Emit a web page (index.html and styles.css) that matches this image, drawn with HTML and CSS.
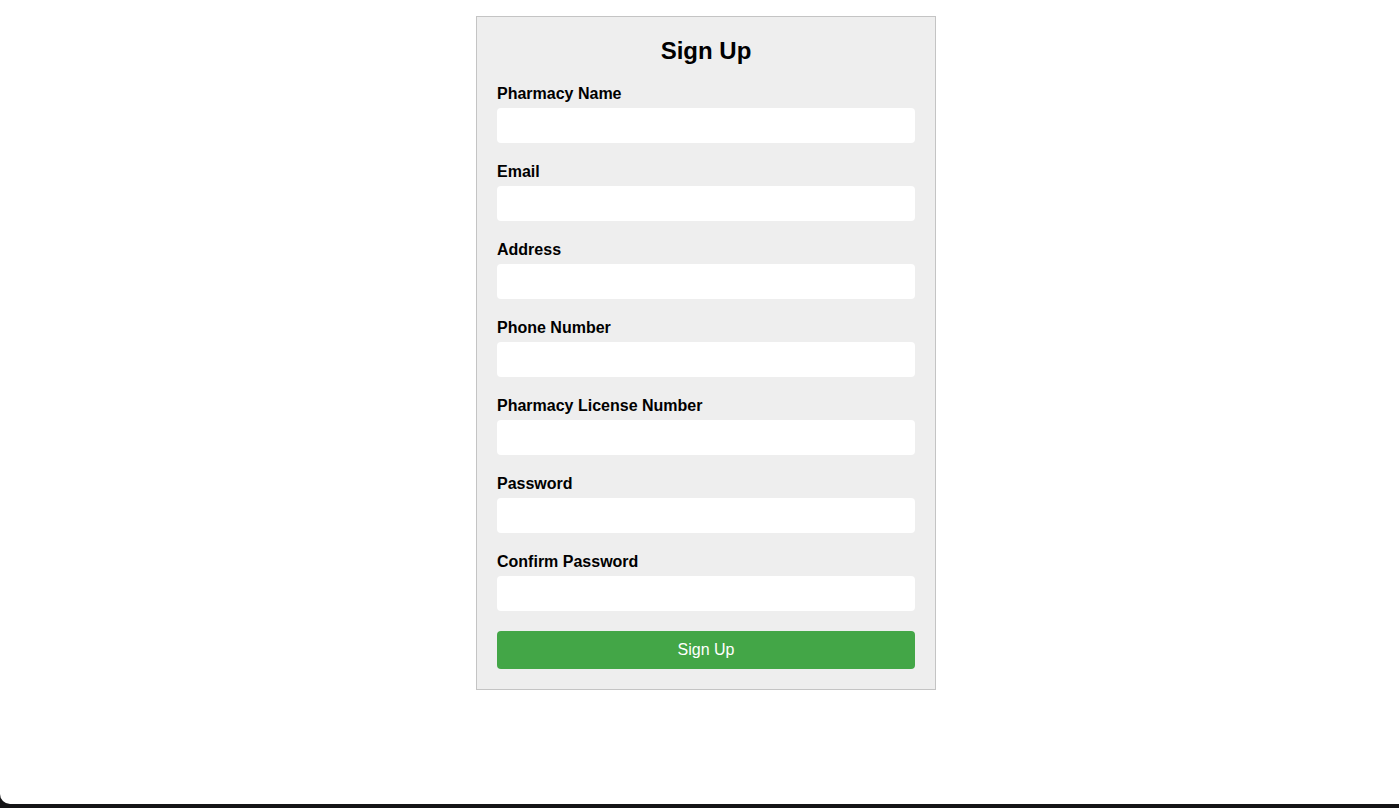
FILE: index.html
```html
<!DOCTYPE html>
<html lang="en">
<head>
<meta charset="utf-8">
<title>Sign Up</title>
<link rel="stylesheet" href="styles.css">
</head>
<body>
<div class="page">
  <form class="card">
    <h2 class="title">Sign Up</h2>
    <div class="group">
      <label class="label">Pharmacy Name</label>
      <input class="input" type="text">
    </div>
    <div class="group">
      <label class="label">Email</label>
      <input class="input" type="email">
    </div>
    <div class="group">
      <label class="label">Address</label>
      <input class="input" type="text">
    </div>
    <div class="group">
      <label class="label">Phone Number</label>
      <input class="input" type="text">
    </div>
    <div class="group">
      <label class="label">Pharmacy License Number</label>
      <input class="input" type="text">
    </div>
    <div class="group">
      <label class="label">Password</label>
      <input class="input" type="password">
    </div>
    <div class="group">
      <label class="label">Confirm Password</label>
      <input class="input" type="password">
    </div>
    <button class="btn" type="button">Sign Up</button>
  </form>
</div>
</body>
</html>
```

FILE: styles.css
```css
html, body {
  margin: 0;
  padding: 0;
  background: #141416;
  height: 808px;
  overflow: hidden;
}
body {
  font-family: "Liberation Sans", Arial, sans-serif;
  color: #000;
}
.page {
  height: 804px;
  background: #fff;
  border-bottom-left-radius: 10px;
  padding: 16px 0 0 476px;
  box-sizing: border-box;
}
.card {
  width: 460px;
  box-sizing: border-box;
  padding: 20px;
  background: #eeeeee;
  border: 1px solid #c4c4c4;
}
.title {
  margin: 0 0 20px;
  font-size: 24px;
  line-height: 28px;
  font-weight: bold;
  text-align: center;
}
.group {
  margin-bottom: 20px;
}
.label {
  display: block;
  font-size: 16px;
  line-height: 18px;
  font-weight: bold;
  margin-bottom: 5px;
}
.input {
  display: block;
  width: 100%;
  height: 35px;
  box-sizing: border-box;
  border: none;
  border-radius: 4px;
  background: #fff;
  padding: 0 10px;
  font-family: inherit;
  font-size: 16px;
}
.btn {
  display: block;
  width: 100%;
  height: 38px;
  border: none;
  border-radius: 4px;
  background: #43a647;
  color: #fff;
  font-family: inherit;
  font-size: 16px;
}
```
